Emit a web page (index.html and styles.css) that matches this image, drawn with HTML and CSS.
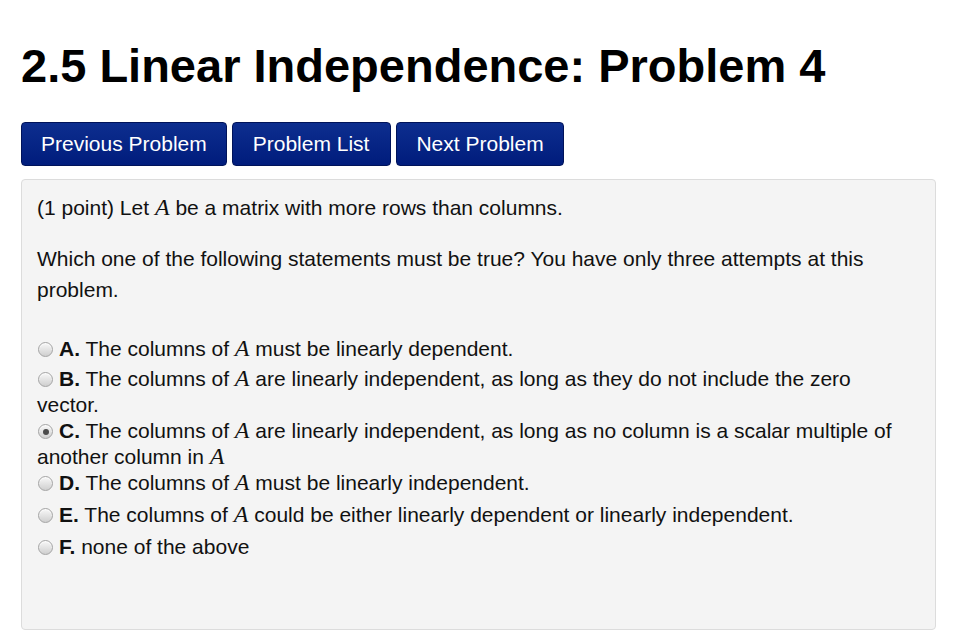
FILE: index.html
```html
<!DOCTYPE html>
<html>
<head>
<meta charset="utf-8">
<link rel="stylesheet" href="styles.css">
</head>
<body>
<h1 class="title">2.5 Linear Independence: Problem 4</h1>
<div class="nav">
  <a class="btn">Previous Problem</a>
  <a class="btn btn-list">Problem List</a>
  <a class="btn">Next Problem</a>
</div>
<div class="problem">
  <p class="line">(1 point) Let <span class="m">A</span> be a matrix with more rows than columns.</p>
  <p class="para">Which one of the following statements must be true? You have only three attempts at this problem.</p>
  <div class="options">
    <div class="opt o1"><span class="radio"></span><b>A.</b> The columns of <span class="m">A</span> must be linearly dependent.</div>
    <div class="opt o2"><span class="radio"></span><b>B.</b> The columns of <span class="m">A</span> are linearly independent, as long as they do not include the zero vector.</div>
    <div class="opt o3"><span class="radio checked"></span><b>C.</b> The columns of <span class="m">A</span> are linearly independent, as long as no column is a scalar multiple of another column in <span class="m">A</span></div>
    <div class="opt o4"><span class="radio"></span><b>D.</b> The columns of <span class="m">A</span> must be linearly independent.</div>
    <div class="opt o5"><span class="radio"></span><b>E.</b> The columns of <span class="m">A</span> could be either linearly dependent or linearly independent.</div>
    <div class="opt o6"><span class="radio"></span><b>F.</b> none of the above</div>
  </div>
</div>
</body>
</html>
```
FILE: styles.css
```css
html, body {
  margin: 0;
  padding: 0;
  background: #ffffff;
}
body {
  font-family: "Liberation Sans", Arial, sans-serif;
  color: #111;
  padding: 0 31px 0 21px;
}
.title {
  margin: 0;
  padding-top: 40px;
  font-size: 47px;
  line-height: 52px;
  font-weight: bold;
  color: #000;
}
.nav {
  display: flex;
  gap: 5px;
  margin-top: 30px;
}
.btn {
  display: block;
  box-sizing: border-box;
  height: 44px;
  line-height: 42px;
  padding: 0 19px;
  font-size: 21px;
  color: #fff;
  background: linear-gradient(#0d2e8f, #001c7c);
  border: 1px solid #00135a;
  border-radius: 4px;
}
.btn-list { padding: 0 21px 0 20px; }
.problem {
  box-sizing: border-box;
  margin-top: 13px;
  height: 451px;
  background: #f4f4f4;
  border: 1px solid #dcdcdc;
  border-radius: 4px;
  padding: 14px 21px 0 15px;
  font-size: 21px;
  color: #111;
}
.problem p { margin: 0; }
.line { line-height: 28px; }
.para { margin-top: 21px !important; line-height: 31px; }
.m {
  font-family: "Liberation Serif", "Times New Roman", serif;
  font-style: italic;
  font-size: 24px;
  line-height: 1;
}
.options { margin-top: 31px; line-height: 26px; }
.o2 { margin-top: 4px; }
.o5 { margin-top: 6px; }
.o6 { margin-top: 6px; }
.radio {
  display: inline-block;
  width: 15px;
  height: 15px;
  box-sizing: border-box;
  border-radius: 50%;
  border: 1px solid #a4a4a4;
  background: linear-gradient(#f8f8f8, #cfcfcf);
  box-shadow: inset 0 1px 1px rgba(255,255,255,0.8);
  vertical-align: -1px;
  margin-right: 6px;
  margin-left: 1px;
  position: relative;
}
.radio.checked::after {
  content: "";
  position: absolute;
  left: 3.5px;
  top: 3.5px;
  width: 6px;
  height: 6px;
  border-radius: 50%;
  background: #4a4a4a;
}
```
